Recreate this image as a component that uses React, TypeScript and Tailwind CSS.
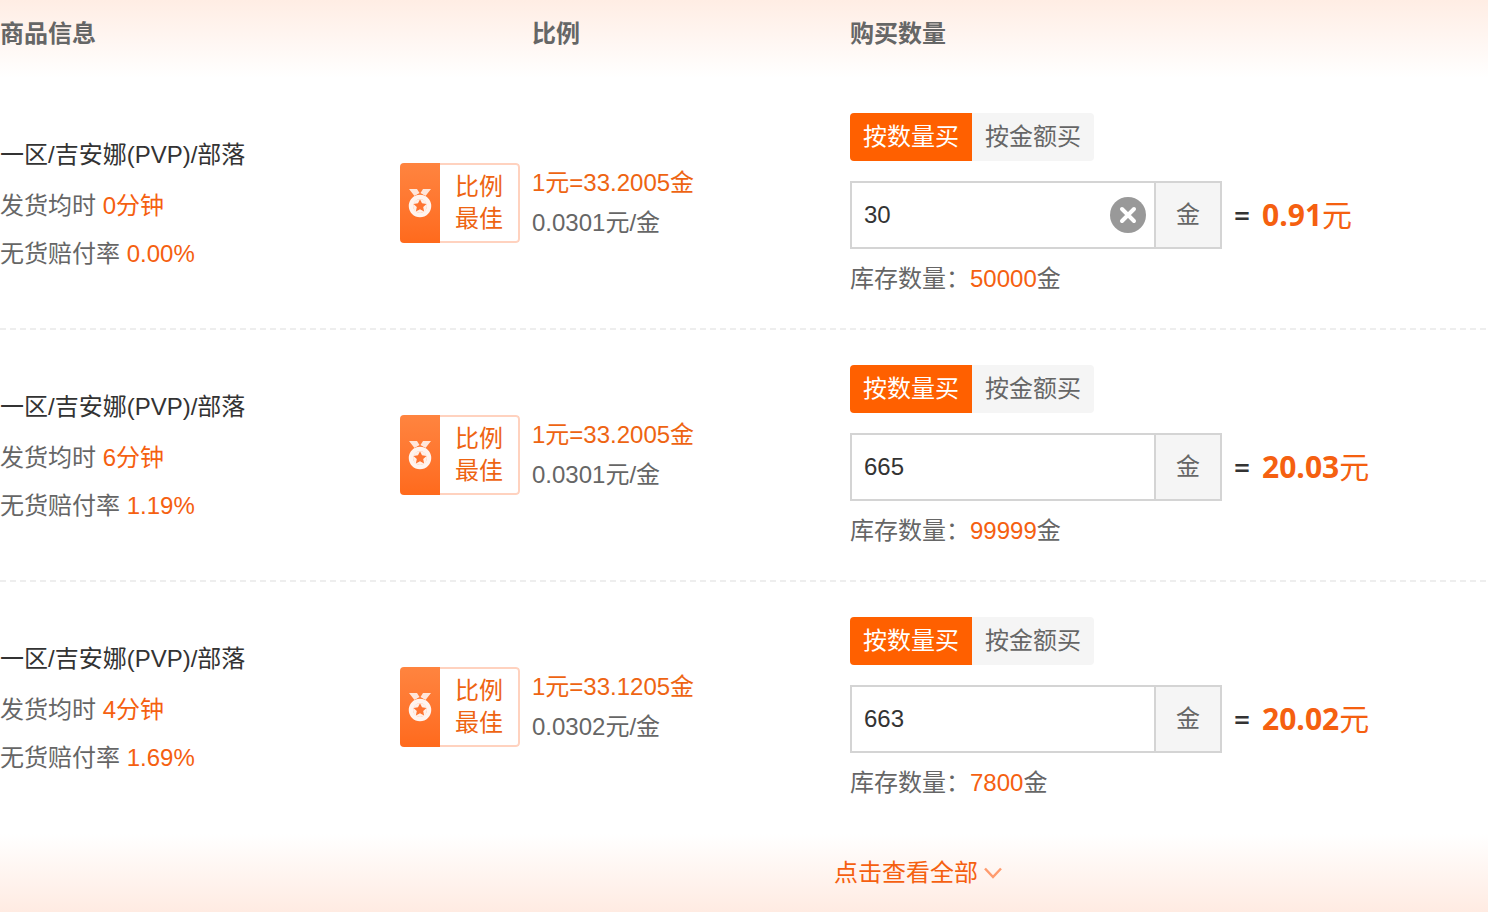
import { useState } from 'react';

type BuyMode = 'quantity' | 'amount';

interface Offer {
  id: number;
  server: string;
  deliveryTime: string;
  refundRate: string;
  ratio: string;
  unitPrice: string;
  quantity: string;
  stock: string;
  total: string;
}

const OFFERS: Offer[] = [
  {
    id: 1,
    server: '一区/吉安娜(PVP)/部落',
    deliveryTime: '0分钟',
    refundRate: '0.00%',
    ratio: '1元=33.2005金',
    unitPrice: '0.0301元/金',
    quantity: '30',
    stock: '50000',
    total: '0.91',
  },
  {
    id: 2,
    server: '一区/吉安娜(PVP)/部落',
    deliveryTime: '6分钟',
    refundRate: '1.19%',
    ratio: '1元=33.2005金',
    unitPrice: '0.0301元/金',
    quantity: '665',
    stock: '99999',
    total: '20.03',
  },
  {
    id: 3,
    server: '一区/吉安娜(PVP)/部落',
    deliveryTime: '4分钟',
    refundRate: '1.69%',
    ratio: '1元=33.1205金',
    unitPrice: '0.0302元/金',
    quantity: '663',
    stock: '7800',
    total: '20.02',
  },
];

function MedalIcon() {
  return (
    <svg width="24" height="30" viewBox="0 0 24 30" aria-hidden="true">
      <path d="M1 1h8l2.5 4-5 3zM23 1h-8l-2.5 4 5 3z" fill="#ffe6da" />
      <circle cx="12" cy="18" r="11.5" fill="#ff7430" />
      <circle cx="12" cy="18" r="9" fill="none" stroke="#fff4ee" strokeWidth="4.5" />
      <circle cx="12" cy="18" r="7" fill="#fff0e8" />
      <path
        d="M12 11.2l2 4.1 4.5.6-3.3 3.1.9 4.5-4.1-2.2-4.1 2.2.9-4.5-3.3-3.1 4.5-.6z"
        fill="#ff7430"
      />
    </svg>
  );
}

function BestRatioBadge() {
  return (
    <div className="flex h-20 w-[120px] overflow-hidden rounded-sm">
      <div className="flex w-10 items-center justify-center bg-linear-to-b from-[#ff843f] to-[#ff6a1c]">
        <MedalIcon />
      </div>
      <div className="flex flex-1 flex-col justify-center rounded-r-sm border-2 border-l-0 border-[#ffd2bf] text-center leading-8 text-[#ee6412]">
        <span>比例</span>
        <span>最佳</span>
      </div>
    </div>
  );
}

function PurchaseCell({ offer }: { offer: Offer }) {
  const [mode, setMode] = useState<BuyMode>('quantity');
  const [quantity, setQuantity] = useState(offer.quantity);
  const inputId = `quantity-${offer.id}`;

  const tabClass = (tab: BuyMode) =>
    mode === tab ? 'bg-[#ff6000] text-white' : 'bg-[#f5f5f5] text-[#666]';

  return (
    <>
      <div className="flex leading-12">
        <button
          type="button"
          onClick={() => setMode('quantity')}
          className={`h-12 rounded-l-sm px-[13px] ${tabClass('quantity')}`}
        >
          按数量买
        </button>
        <button
          type="button"
          onClick={() => setMode('amount')}
          className={`h-12 rounded-r-sm px-[13px] ${tabClass('amount')}`}
        >
          按金额买
        </button>
      </div>

      <div className="mt-5 flex items-center">
        <div className="flex h-[68px] w-[372px] border-2 border-[#d4d4d4]">
          <input
            id={inputId}
            type="text"
            aria-label="购买数量"
            value={quantity}
            onChange={(e) => setQuantity(e.target.value)}
            className="min-w-0 flex-1 pl-3 text-[#333] outline-none"
          />
          {offer.id === 1 && (
            <button
              type="button"
              aria-label="清空"
              onClick={() => setQuantity('')}
              className="mr-2 self-center"
            >
              <svg width="36" height="36" viewBox="0 0 36 36">
                <circle cx="18" cy="18" r="18" fill="#999" />
                <path
                  d="M12 12l12 12M24 12L12 24"
                  stroke="#fff"
                  strokeWidth="4"
                  strokeLinecap="round"
                />
              </svg>
            </button>
          )}
          <label
            htmlFor={inputId}
            className="flex w-[66px] items-center justify-center border-l-2 border-[#d4d4d4] bg-[#f5f5f5] text-[#666]"
          >
            金
          </label>
        </div>
        <span className="ml-3 font-['Open_Sans','Noto_Sans_CJK_SC',sans-serif] text-[28px] leading-10 font-semibold text-[#333]">
          =
        </span>
        <span className="ml-3 font-['Open_Sans','Noto_Sans_CJK_SC',sans-serif] text-[30px] leading-10 text-[#f56010]">
          <b>{offer.total}</b>元
        </span>
      </div>

      <p className="mt-1.5 leading-12">
        库存数量：<span className="text-[#f56010]">{offer.stock}</span>金
      </p>
    </>
  );
}

export default function App() {
  return (
    <div className="min-h-screen bg-white font-['Liberation_Sans','Noto_Sans_CJK_SC',sans-serif] text-2xl text-[#666]">
      <table className="w-full table-fixed border-separate border-spacing-0 text-left">
        <colgroup>
          <col className="w-[400px]" />
          <col className="w-[132px]" />
          <col className="w-[318px]" />
          <col />
        </colgroup>
        <thead className="bg-linear-to-b from-[#ffede4] to-white">
          <tr>
            <th className="h-[78px] pt-4 align-top leading-9">商品信息</th>
            <th></th>
            <th className="pt-4 align-top leading-9">比例</th>
            <th className="pt-4 align-top leading-9">购买数量</th>
          </tr>
        </thead>
        <tbody>
          {OFFERS.map((offer) => (
            <tr
              key={offer.id}
              className="h-[252px] bg-[repeating-linear-gradient(to_right,#eee_0_6px,transparent_6px_10px)] bg-[length:100%_2px] bg-bottom bg-no-repeat last:bg-none"
            >
              <td className="pt-[53px] align-top leading-12">
                <p className="mb-[3px] text-[#333]">{offer.server}</p>
                <p>
                  发货均时 <span className="text-[#f56010]">{offer.deliveryTime}</span>
                </p>
                <p>
                  无货赔付率 <span className="text-[#f56010]">{offer.refundRate}</span>
                </p>
              </td>
              <td className="pb-0.5 align-middle">
                <BestRatioBadge />
              </td>
              <td className="pb-0.5 align-middle leading-10">
                <p className="text-[#ee6412]">{offer.ratio}</p>
                <p>{offer.unitPrice}</p>
              </td>
              <td className="pt-[35px] align-top">
                <PurchaseCell offer={offer} />
              </td>
            </tr>
          ))}
        </tbody>
      </table>

      <div className="flex h-[78px] items-center bg-linear-to-b from-white to-[#ffebe2] pl-[834px]">
        <a href="#all" className="flex items-center gap-1.5 leading-9 text-[#f56010]">
          点击查看全部
          <svg width="18" height="12" viewBox="0 0 18 12" fill="none" aria-hidden="true">
            <path d="M1 1.5l8 8.5 8-8.5" stroke="#ff9b6e" strokeWidth="2.5" />
          </svg>
        </a>
      </div>
    </div>
  );
}
